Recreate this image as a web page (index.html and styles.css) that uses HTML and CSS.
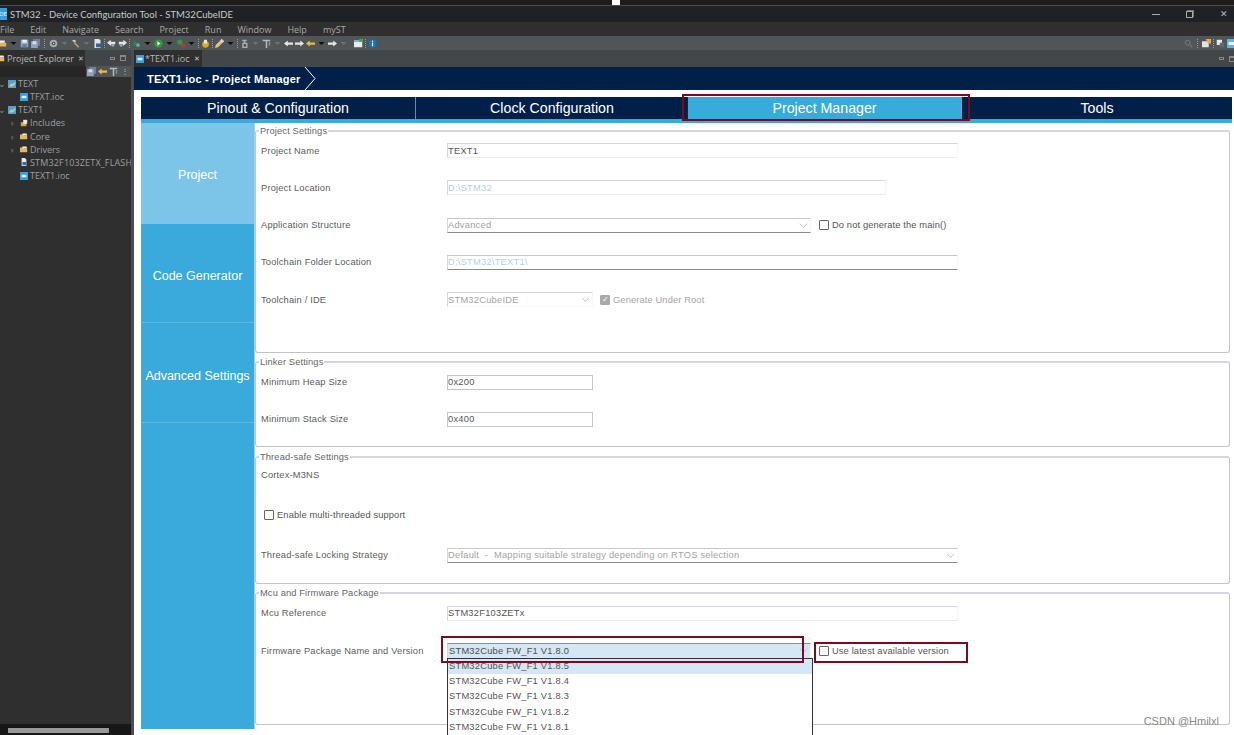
FILE: index.html
```html
<!DOCTYPE html>
<html lang="en">
<head>
<meta charset="utf-8">
<title>STM32 - Device Configuration Tool - STM32CubeIDE</title>
<link rel="stylesheet" href="styles.css">
</head>
<body>
<svg class="defs" width="0" height="0" aria-hidden="true">
  <symbol id="i-mx" viewBox="0 0 10 10"><rect width="10" height="10" fill="#3a9fdc"/><rect x="2" y="3.5" width="6" height="3" fill="#dff1fb"/></symbol>
  <symbol id="i-proj" viewBox="0 0 10 10"><rect width="10" height="10" fill="#4aa3d8"/><path d="M1 8l3-4 2 1 3-3v3L6 8z" fill="#d9c27a"/></symbol>
  <symbol id="i-folder" viewBox="0 0 10 10"><path d="M0 3h4l1 1h4v5H0z" fill="#e9b85c"/><path d="M3 2h5l1 2H3z" fill="#f3efe2"/></symbol>
  <symbol id="i-inc" viewBox="0 0 10 10"><path d="M1 4h7v5H1z" fill="#d5a84f"/><path d="M4 1h5v5H4z" fill="#e8e8e8"/></symbol>
  <symbol id="i-ld" viewBox="0 0 10 10"><path d="M2 0h4l2 2v8H2z" fill="#e8e8e8"/><rect x="3" y="5" width="5" height="4" fill="#2f6db0"/></symbol>
  <symbol id="i-arrow" viewBox="0 0 12 12"><path d="M2 4h8L6 8z" fill="#0c0c0c"/></symbol>
  <symbol id="i-arrowg" viewBox="0 0 12 12"><path d="M2 4h8L6 8z" fill="#6d7173"/></symbol>
  <symbol id="i-new" viewBox="0 0 12 12"><path d="M0 4h5l1 1h5v5H0z" fill="#e0b55a"/><path d="M1 2h8v3H1z" fill="#f2f2f2"/></symbol>
  <symbol id="i-save" viewBox="0 0 12 12"><path d="M1 1h10v10H1z" fill="#8ea9c9"/><rect x="3" y="1" width="6" height="4" fill="#e8eef5"/><rect x="3" y="7" width="6" height="4" fill="#5f7ea6"/></symbol>
  <symbol id="i-saveall" viewBox="0 0 12 12"><path d="M3 0h9v9H3z" fill="#6f8198"/><path d="M0 3h9v9H0z" fill="#8fa3bb"/><rect x="2" y="3" width="5" height="4" fill="#d5dde6"/></symbol>
  <symbol id="i-gear" viewBox="0 0 12 12"><circle cx="6" cy="6" r="5" fill="#a7abad"/><circle cx="6" cy="6" r="2.4" fill="#3f4a52"/><circle cx="6" cy="6" r="1" fill="#d8d8d8"/></symbol>
  <symbol id="i-hammer" viewBox="0 0 12 12"><path d="M1 2l4-1 2 2-2 2z" fill="#c9c9c9"/><path d="M5 4l6 6-1.500 1.500-6-6z" fill="#b99a6a"/></symbol>
  <symbol id="i-doc" viewBox="0 0 12 12"><path d="M2 0h6l2 2v10H2z" fill="#dfe3e6"/><rect x="4" y="6" width="7" height="5" fill="#2f62a8"/></symbol>
  <symbol id="i-back" viewBox="0 0 12 12"><path d="M0 5l5-4v2.500h6v3H6L5 9z" fill="#e4e4e4"/><path d="M6 7l5 0-2 3H6z" fill="#a9adaf"/></symbol>
  <symbol id="i-fwd" viewBox="0 0 12 12"><path d="M12 5L7 1v2.500H1v3h5l1 2.500z" fill="#e4e4e4"/><path d="M6 7H1l2 3h3z" fill="#a9adaf"/></symbol>
  <symbol id="i-bug" viewBox="0 0 12 12"><path d="M2 1l6 5-6 4z" fill="#2f7f4f"/><circle cx="8" cy="8" r="2.500" fill="#5fb0a0"/></symbol>
  <symbol id="i-run" viewBox="0 0 12 12"><circle cx="6" cy="6" r="5.500" fill="#2f9a3f"/><path d="M4.500 3l4 3-4 3z" fill="#ecf7ec"/></symbol>
  <symbol id="i-ext" viewBox="0 0 12 12"><circle cx="5" cy="4" r="3.500" fill="#2f9a3f"/><rect x="6" y="6" width="6" height="5" rx="2" fill="#c8352f"/></symbol>
  <symbol id="i-flash" viewBox="0 0 12 12"><circle cx="6" cy="7" r="4.500" fill="#e0a52e"/><rect x="4" y="1" width="4" height="5" fill="#efe7c9"/></symbol>
  <symbol id="i-pen" viewBox="0 0 12 12"><path d="M9 0l3 3-8 8-4 1 1-4z" fill="#e9c27a"/><path d="M9 0l3 3-2 2-3-3z" fill="#d9d9d9"/></symbol>
  <symbol id="i-t1" viewBox="0 0 12 12"><path d="M3 1h6v2H7v2h3v7H3V5h2V3H3z" fill="#a9adaf"/><rect x="5" y="7" width="3" height="3" fill="#3c4245"/></symbol>
  <symbol id="i-t2" viewBox="0 0 12 12"><path d="M1 1h10v2H7v9H5V3H1z" fill="#b9bcbe"/><rect x="9" y="4" width="2" height="5" fill="#8b8f91"/></symbol>
  <symbol id="i-navl" viewBox="0 0 12 12"><path d="M0 6l5-4v2.500h7v3H5V10z" fill="#e6e6e6"/></symbol>
  <symbol id="i-navr" viewBox="0 0 12 12"><path d="M12 6L7 2v2.500H0v3h7V10z" fill="#e6e6e6"/></symbol>
  <symbol id="i-navy" viewBox="0 0 12 12"><path d="M0 6l5-4v2.500h7v3H5V10z" fill="#f0b93f"/></symbol>
  <symbol id="i-win" viewBox="0 0 12 12"><rect y="2" width="11" height="9" fill="#e6edf2"/><rect y="2" width="11" height="2" fill="#8fb0c8"/><rect x="7" width="5" height="4" fill="#49a54b"/></symbol>
  <symbol id="i-info" viewBox="0 0 12 12"><circle cx="6" cy="6" r="5.500" fill="#1573b8"/><rect x="5.200" y="2.200" width="1.600" height="1.600" fill="#fff"/><rect x="5.200" y="4.800" width="1.600" height="4.800" fill="#fff"/></symbol>
  <symbol id="i-search" viewBox="0 0 12 12"><circle cx="5" cy="5" r="3.200" fill="none" stroke="#777b7d" stroke-width="1.300"/><path d="M7.500 7.500L11 11" stroke="#777b7d" stroke-width="1.500"/></symbol>
  <symbol id="i-persp" viewBox="0 0 12 12"><rect x="1" y="1" width="7" height="7" fill="#e8e8e8"/><rect x="5" y="5" width="6" height="6" fill="#5f6a70"/></symbol>
  <symbol id="i-cube" viewBox="0 0 12 12"><rect width="12" height="12" rx="1" fill="#5fb3e6"/><rect x="2" y="4" width="8" height="4" fill="#e4f3fc"/></symbol>
  <symbol id="i-chev" viewBox="0 0 10 10"><path d="M1 3l4 4 4-4" fill="none" stroke="#b9b9b9"/></symbol>
  <symbol id="i-open" viewBox="0 0 12 12"><rect y="3" width="9" height="8" fill="#e3e3e3"/><path d="M5 0h7v6H8z" fill="#e2ad4c"/></symbol>
</svg>

<div class="handle"></div>
<div class="topstrip"></div>

<header class="titlebar">
  <span class="app-ide">IDE</span>
  <span class="title-text">STM32 - Device Configuration Tool - STM32CubeIDE</span>
  <span class="win-controls">
    <span class="win-min"></span>
    <span class="win-max"></span>
    <span class="win-close">✕</span>
  </span>
</header>

<nav class="menubar">
  <span>File</span><span>Edit</span><span>Navigate</span><span>Search</span><span>Project</span><span>Run</span><span>Window</span><span>Help</span><span>myST</span>
</nav>

<div class="toolbar">
  <svg class="ti"><use href="#i-new"/></svg><svg class="ti"><use href="#i-arrow"/></svg>
  <svg class="ti"><use href="#i-save"/></svg><svg class="ti"><use href="#i-saveall"/></svg><i class="tsep tsep-wide"></i>
  <svg class="ti"><use href="#i-gear"/></svg><svg class="ti"><use href="#i-arrowg"/></svg>
  <svg class="ti"><use href="#i-hammer"/></svg><svg class="ti"><use href="#i-arrowg"/></svg>
  <svg class="ti"><use href="#i-doc"/></svg><i class="tsep"></i>
  <svg class="ti"><use href="#i-back"/></svg><svg class="ti"><use href="#i-fwd"/></svg><i class="tsep"></i>
  <svg class="ti"><use href="#i-bug"/></svg><svg class="ti"><use href="#i-arrow"/></svg>
  <svg class="ti"><use href="#i-run"/></svg><svg class="ti"><use href="#i-arrow"/></svg>
  <svg class="ti"><use href="#i-ext"/></svg><svg class="ti"><use href="#i-arrow"/></svg><i class="tsep"></i>
  <svg class="ti"><use href="#i-flash"/></svg><i class="tsep"></i>
  <svg class="ti"><use href="#i-pen"/></svg><svg class="ti"><use href="#i-arrow"/></svg><i class="tsep"></i>
  <svg class="ti"><use href="#i-t1"/></svg><svg class="ti"><use href="#i-arrowg"/></svg>
  <svg class="ti"><use href="#i-t2"/></svg><svg class="ti"><use href="#i-arrowg"/></svg>
  <svg class="ti"><use href="#i-navl"/></svg><svg class="ti"><use href="#i-navr"/></svg>
  <svg class="ti"><use href="#i-navy"/></svg><svg class="ti"><use href="#i-arrow"/></svg>
  <svg class="ti"><use href="#i-navr"/></svg><svg class="ti"><use href="#i-arrowg"/></svg>
  <svg class="ti ti-gap"><use href="#i-win"/></svg><i class="tsep"></i>
  <svg class="ti"><use href="#i-info"/></svg>
  <span class="toolbar-right">
    <svg class="ti"><use href="#i-search"/></svg><i class="tsep tsep-wide"></i>
    <svg class="ti"><use href="#i-open"/></svg><i class="tsep"></i>
    <svg class="ti"><use href="#i-persp"/></svg><svg class="ti"><use href="#i-cube"/></svg>
  </span>
</div>

<div class="workspace">
  <aside class="explorer">
    <div class="ex-tabs">
      <div class="ex-tab"><svg class="tree-ic ex-tab-ic"><use href="#i-folder"/></svg><span>Project Explorer</span><span class="tab-x">✕</span></div>
      <span class="view-min"></span><span class="view-max"></span>
    </div>
    <div class="ex-tools">
      <span class="ex-toolset">
        <svg class="ti-s"><use href="#i-saveall"/></svg><svg class="ti-s"><use href="#i-navy"/></svg><svg class="ti-s"><use href="#i-t2"/></svg><span class="ex-dots">⋮</span>
      </span>
    </div>
    <ul class="tree">
      <li class="lvl0"><span class="twist">⌄</span><svg class="tree-ic"><use href="#i-proj"/></svg>TEXT</li>
      <li class="lvl1"><svg class="tree-ic"><use href="#i-mx"/></svg>TFXT.ioc</li>
      <li class="lvl0"><span class="twist">⌄</span><svg class="tree-ic"><use href="#i-proj"/></svg>TEXT1</li>
      <li class="lvl2"><span class="twist">›</span><svg class="tree-ic"><use href="#i-inc"/></svg>Includes</li>
      <li class="lvl2"><span class="twist">›</span><svg class="tree-ic"><use href="#i-folder"/></svg>Core</li>
      <li class="lvl2"><span class="twist">›</span><svg class="tree-ic"><use href="#i-folder"/></svg>Drivers</li>
      <li class="lvl1 long"><svg class="tree-ic"><use href="#i-ld"/></svg>STM32F103ZETX_FLASH</li>
      <li class="lvl1"><svg class="tree-ic"><use href="#i-mx"/></svg>TEXT1.ioc</li>
    </ul>
    <div class="ex-scroll"><div class="ex-thumb"></div></div>
  </aside>

  <main class="editor">
    <div class="ed-tabs">
      <div class="ed-tab"><svg class="tree-ic"><use href="#i-mx"/></svg><span>*TEXT1.ioc</span><span class="tab-x">✕</span></div>
      <span class="view-min ed-min"></span><span class="view-max"></span>
    </div>
    <div class="crumb">
      <span class="crumb-text">TEXT1.ioc - Project Manager</span>
      <svg class="crumb-chev" width="13" height="23" viewBox="0 0 13 23"><path d="M1 0l10 11.500L1 23" fill="none" stroke="#fff" stroke-width="1"/></svg>
    </div>
    <div class="canvas">
      <div class="nav-tabs">
        <div class="nav-tab nav-t1">Pinout &amp; Configuration</div>
        <div class="nav-tab nav-t2">Clock Configuration</div>
        <div class="nav-tab nav-t3 active">Project Manager<span class="red red-tab"></span></div>
        <div class="nav-tab nav-t4">Tools</div>
      </div>
      <div class="stripe"></div>
      <div class="pm">
        <div class="side">
          <div class="side-item side-project selected">Project</div>
          <div class="side-item side-code">Code Generator</div>
          <div class="side-item side-adv">Advanced Settings</div>
        </div>
        <div class="groups">
          <section class="group g-project">
            <div class="legend">Project Settings</div>
            <div class="row"><label>Project Name</label><div class="field w-wide"><span>TEXT1</span></div></div>
            <div class="row"><label>Project Location</label><div class="field w-loc blue"><span>D:\STM32</span></div></div>
            <div class="row"><label>Application Structure</label>
              <div class="field combo w-combo dim"><span>Advanced</span><svg class="chev"><use href="#i-chev"/></svg></div>
              <span class="check check-a"></span><span class="check-label">Do not generate the main()</span>
            </div>
            <div class="row"><label>Toolchain Folder Location</label><div class="field combo w-wide blue"><span>D:\STM32\TEXT1\</span></div></div>
            <div class="row"><label>Toolchain / IDE</label>
              <div class="field w-short dim tool"><span>STM32CubeIDE</span><svg class="chev"><use href="#i-chev"/></svg></div>
              <span class="check checked check-b">✓</span><span class="check-label dim">Generate Under Root</span>
            </div>
          </section>

          <section class="group g-linker">
            <div class="legend">Linker Settings</div>
            <div class="row"><label>Minimum Heap Size</label><div class="field boxed w-short"><span>0x200</span></div></div>
            <div class="row"><label>Minimum Stack Size</label><div class="field boxed w-short"><span>0x400</span></div></div>
          </section>

          <section class="group g-thread">
            <div class="legend">Thread-safe Settings</div>
            <div class="row"><label>Cortex-M3NS</label></div>
            <div class="row row-check"><span class="check"></span><span class="check-label">Enable multi-threaded support</span></div>
            <div class="row"><label>Thread-safe Locking Strategy</label>
              <div class="field combo w-wide dim"><span>Default  -  Mapping suitable strategy depending on RTOS selection</span><svg class="chev"><use href="#i-chev"/></svg></div>
            </div>
          </section>

          <section class="group g-mcu">
            <div class="legend">Mcu and Firmware Package</div>
            <div class="row"><label>Mcu Reference</label><div class="field w-wide"><span>STM32F103ZETx</span></div></div>
            <div class="row"><label>Firmware Package Name and Version</label>
              <div class="field combo w-combo fw"><span>STM32Cube FW_F1 V1.8.0</span><svg class="chev"><use href="#i-chev"/></svg>
                <span class="red red-fw"></span>
                <ul class="dropdown">
                  <li class="hl">STM32Cube FW_F1 V1.8.5</li>
                  <li>STM32Cube FW_F1 V1.8.4</li>
                  <li>STM32Cube FW_F1 V1.8.3</li>
                  <li>STM32Cube FW_F1 V1.8.2</li>
                  <li>STM32Cube FW_F1 V1.8.1</li>
                </ul>
              </div>
              <div class="latest"><span class="check check-a"></span><span class="check-label">Use latest available version</span><span class="red red-latest"></span></div>
            </div>
            <div class="watermark">CSDN @Hmilxl</div>
          </section>
        </div>
      </div>
    </div>
  </main>
</div>
</body>
</html>
```
FILE: styles.css
```css
* { box-sizing: border-box; }
html, body { margin: 0; padding: 0; }
body {
  position: relative;
  width: 1234px;
  height: 735px;
  overflow: hidden;
  background: #2f2f2f;
  font-family: "Liberation Sans", Arial, sans-serif;
  font-size: 9px;
  color: #555;
  display: flex;
  flex-direction: column;
}
ul { list-style: none; margin: 0; padding: 0; }
.defs { position: absolute; }

.handle { position: absolute; left: 612px; top: 0; width: 8px; height: 5px; background: #fff; }
.topstrip { height: 6px; background: #1b1b1b; border-bottom: 1px solid #4c4c4c; border-top: 4px solid #1b1b1b; flex: none; }

/* title bar */
.titlebar { height: 16px; background: #202124; display: flex; align-items: center; color: #c9c9c9; flex: none; font-family: Lato, sans-serif; font-size: 9.500px; }
.app-ide { width: 7px; height: 12px; background: #33a0dc; color: #e8f5fc; font-size: 6px; line-height: 12px; overflow: hidden; direction: rtl; margin-right: 3px; }
.title-text { white-space: nowrap; }
.win-controls { margin-left: auto; display: flex; align-items: center; margin-right: 6px; }
.win-min { width: 8px; height: 1px; background: #aaa; margin-right: 26px; }
.win-max { width: 7px; height: 7px; border: 1px solid #aaa; margin-right: 27px; box-shadow: 1px -1px 0 0 #777; }
.win-close { font-size: 9px; color: #bbb; line-height: 10px; }

/* menu */
.menubar { height: 14px; background: #2f2f2f; display: flex; align-items: center; gap: 16px; color: #a7a9ab; flex: none; font-family: "Open Sans", sans-serif; font-size: 9px; white-space: nowrap; }

/* toolbar */
.toolbar { height: 14px; background: #505557; display: flex; align-items: center; flex: none; margin-left: -3px; width: 1237px; }
.ti { width: 9px; height: 9px; margin: 0 1px; flex: none; }
.tsep { width: 1px; height: 9px; margin: 0 1px; border-left: 1px dotted #999; flex: none; }
.tsep-wide { margin: 0 3px; }
.ti-gap { margin-left: 5px; }
.toolbar-right { margin-left: auto; display: flex; align-items: center; margin-right: -3px; }

/* workspace */
.workspace { flex: 1; display: flex; min-height: 0; }
.explorer { width: 134px; flex: none; background: #2f2f2f; border-right: 3px solid #4a4e50; display: flex; flex-direction: column; position: relative; overflow: hidden; }
.ex-tabs { height: 16px; background: #424547; display: flex; align-items: center; flex: none; }
.ex-tab { width: 85px; height: 16px; background: #2f2f2f; color: #b8babc; display: flex; align-items: center; font-family: "Open Sans", sans-serif; font-size: 9px; white-space: nowrap; flex: none; margin-right: 25px; }
.ex-tab-ic { margin-left: -3px; margin-right: 3px; }
.tab-x { font-size: 7px; color: #c8c8c8; margin-left: 4px; }
.view-min { width: 5px; height: 3px; border: 1px solid #888; margin-right: 5px; flex: none; }
.view-max { width: 6px; height: 6px; border: 1px solid #888; border-top-width: 2px; flex: none; }
.ex-tools { height: 11px; background: #262626; display: flex; justify-content: flex-end; flex: none; }
.ex-toolset { width: 45px; background: #505557; display: flex; align-items: center; padding-left: 1px; gap: 2px; }
.ti-s { width: 9px; height: 9px; flex: none; }
.ex-dots { color: #ccc; font-size: 8px; margin-left: 1px; }
.tree { flex: 1; color: #9d9fa1; font-family: "Open Sans", sans-serif; font-size: 9px; overflow: hidden; }
.tree li { height: 13.150px; display: flex; align-items: center; white-space: nowrap; }
.tree .lvl1 { padding-left: 20px; }
.tree .lvl2 { padding-left: 8px; }
.tree .long { letter-spacing: .16px; }
.tree-ic { width: 8px; height: 8px; margin-right: 2px; flex: none; }
.twist { width: 8px; flex: none; text-align: center; font-size: 9px; color: #8d8f91; line-height: 9px; }
.lvl0 .twist { margin-left: -2px; margin-right: 2px; }
.lvl2 .twist { margin-right: 4px; }
.ex-scroll { height: 11px; background: #171717; flex: none; padding: 4px 22px 2px 8px; }
.ex-thumb { height: 5px; background: #999; }

/* editor */
.editor { flex: 1; min-width: 0; background: #fff; display: flex; flex-direction: column; }
.ed-tabs { height: 17px; background: #444749; display: flex; align-items: center; flex: none; }
.ed-tab { width: 68px; height: 17px; background: #2f2f2f; color: #b8babc; display: flex; align-items: center; padding-left: 2px; font-family: "Open Sans", sans-serif; font-size: 9px; white-space: nowrap; margin-right: auto; }
.ed-tab .tree-ic { margin-right: 1px; }
.ed-min { margin-right: 5px; }
.ed-tabs .view-max { margin-right: -1px; }
.crumb { height: 23px; background: #012048; display: flex; align-items: center; padding-left: 13px; flex: none; }
.crumb-text { font-weight: 700; font-size: 11px; color: #fff; letter-spacing: .18px; white-space: nowrap; }
.crumb-chev { margin-left: 4px; }
.canvas { flex: 1; min-height: 0; padding: 7px 2px 6px 7px; display: flex; flex-direction: column; }

.nav-tabs { height: 22px; display: flex; background: #012048; flex: none; }
.nav-tab { color: #fff; font-size: 14.200px; line-height: 23px; text-align: center; position: relative; white-space: nowrap; }
.nav-t1 { width: 275px; border-right: 1px solid #6f87a5; }
.nav-t2 { width: 272px; }
.nav-t3 { width: 274px; border-right: 1px solid #6f9fc4; }
.nav-t4 { flex: 1; }
.nav-tab.active { background: #3aa9dc; }
.stripe { height: 4px; background: #3aa9dc; flex: none; }
.red { position: absolute; border: 2px solid #7c0a1e; pointer-events: none; z-index: 3; }
.red-tab { left: -6px; right: -9px; top: -3px; bottom: -2px; }

.pm { flex: 1; min-height: 0; display: flex; }
.side { width: 113px; flex: none; background: #3aa9dc; }
.side-item { color: #fff; font-size: 12.500px; display: flex; align-items: center; justify-content: center; border-bottom: 1px solid #5ab9e4; white-space: nowrap; }
.side-project { height: 101px; padding-top: 3px; }
.side-code { height: 99px; padding-top: 5px; }
.side-adv { height: 100px; padding-top: 6px; }
.side-item.selected { background: #7cc4e8; border-bottom-color: #7cc4e8; }

.groups { flex: 1; min-width: 0; border-left: 1px solid #9fd3ee; padding: 7px 2px 0 0; display: flex; flex-direction: column; }
.group { position: relative; border: 1px solid #c4c4c4; border-top: 2px solid #d4d4da; border-radius: 3px; padding-left: 5px; display: flex; flex-direction: column; }
.legend { position: absolute; left: 3px; top: -6px; background: #fff; padding: 0 1px; color: #666; font-size: 9.300px; line-height: 11px; letter-spacing: .13px; white-space: nowrap; }
.g-project { height: 223px; padding-top: 8.500px; gap: 17.300px; }
.g-linker { height: 86px; margin-top: 8px; padding-top: 9px; gap: 17.300px; }
.g-thread { height: 128px; margin-top: 9px; padding-top: 7px; gap: 20px; }
.g-mcu { height: 133px; margin-top: 8px; padding-top: 9px; gap: 17.500px; }

.row { height: 20px; display: flex; align-items: center; flex: none; }
.row label { width: 186px; flex: none; color: #5c5c5c; font-size: 9.300px; letter-spacing: .18px; white-space: nowrap; }
.row-check { padding-left: 3px; }

.field { position: relative; height: 15px; padding-left: 0; border-top: 1px solid #d6d6d6; border-left: 1px solid #d6d6d6; border-bottom: 1px solid #ececec; border-right: 1px solid #f6f6f6; display: flex; align-items: center; color: #555; font-size: 9.300px; letter-spacing: .25px; white-space: pre; flex: none; }
.w-wide { width: 511px; }
.w-loc { width: 439px; }
.w-combo { width: 364px; }
.w-short { width: 146px; }
.blue { color: #b4cfe6; }
.dim { color: #a3a3a3; }
.combo { border-bottom-color: #8c8c8c; border-top-color: #c8c8c8; }
.boxed { border: 1px solid #c6c6c6; }
.tool { border-bottom-color: #f8f8f8; }
.chev { position: absolute; right: 2px; top: 2px; width: 9px; height: 9px; }
.fw { background: #d5e6f4; color: #4e4e4e; border-top-color: #8c8c8c; border-bottom: 0; padding-left: 1px; }

.check { width: 10px; height: 10px; border: 1px solid #666; background: #fff; flex: none; display: inline-block; margin-right: 3px; border-radius: 1px; }
.check-a { margin-left: 8px; }
.check-b { margin-left: 7px; }
.check.checked { background: #a8a8a8; border-color: #a8a8a8; color: #fff; font-size: 8px; line-height: 8px; text-align: center; }
.check-label { color: #555; font-size: 9.300px; letter-spacing: .13px; white-space: nowrap; }
.check-label.dim { color: #a3a3a3; }

.latest { position: relative; display: flex; align-items: center; height: 15px; }
.red-latest { left: 3px; right: -19px; top: -1px; bottom: -5px; }
.red-fw { left: -7px; right: 6px; top: -8px; bottom: -5px; }
.dropdown { position: absolute; left: -1px; top: 14px; width: 366px; height: 78px; background: #fff; border: 1px solid #333; border-bottom: 0; z-index: 2; color: #555; white-space: normal; }
.dropdown li { height: 15.200px; line-height: 15.200px; padding-left: 1px; white-space: nowrap; }
.dropdown .hl { background: #d5e6f4; }
.watermark { position: absolute; right: 10px; bottom: -3px; color: #8a8a8a; font-size: 11px; }
```
